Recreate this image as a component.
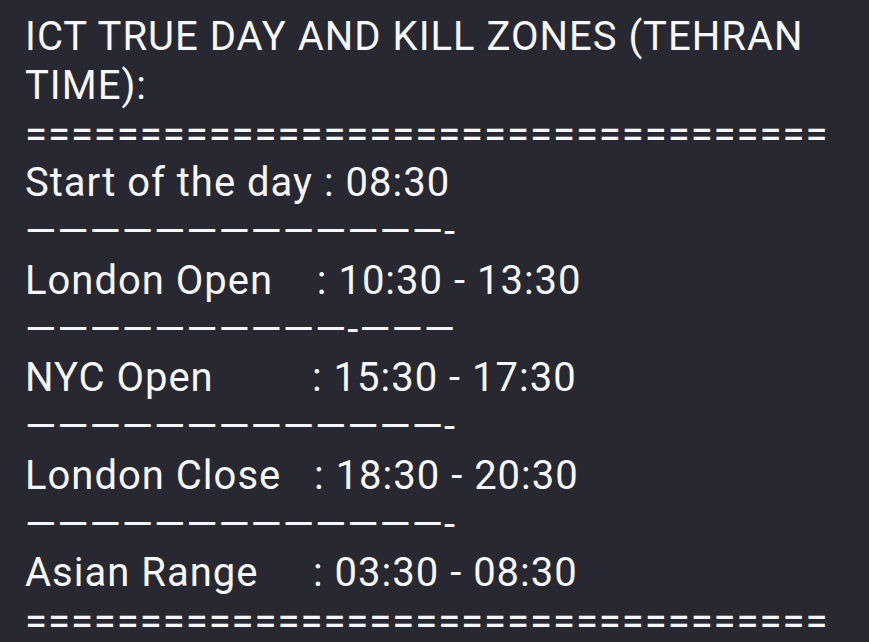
import React from "react";

const lines = [
  "ICT TRUE DAY AND KILL ZONES (TEHRAN",
  "TIME):",
  "===================================",
  "Start of the day : 08:30",
  "—————————————-",
  "London Open    : 10:30 - 13:30",
  "——————————-———",
  "NYC Open         : 15:30 - 17:30",
  "—————————————-",
  "London Close   : 18:30 - 20:30",
  "—————————————-",
  "Asian Range     : 03:30 - 08:30",
  "===================================",
];

export default function App() {
  return (
    <div className="w-[869px] h-[642px] overflow-hidden bg-[#282833] text-[#f7f7f9] font-['Roboto',sans-serif]">
      <div className="pl-[25px] pt-[13px] text-[40px] leading-[48.75px] tracking-[1px] whitespace-pre">
        {lines.map((line, i) => (
          <div key={i}>{line}</div>
        ))}
      </div>
    </div>
  );
}
